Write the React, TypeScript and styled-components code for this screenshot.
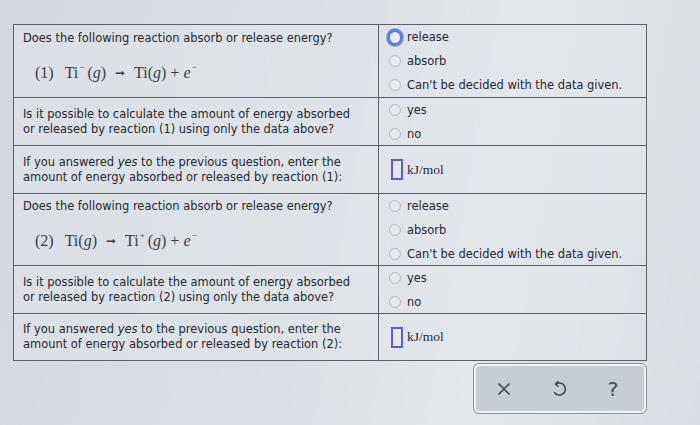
import React from "react";
import styled, { createGlobalStyle } from "styled-components";

const Global = createGlobalStyle`
  html, body { margin: 0; padding: 0; }
  body {
    width: 700px;
    height: 425px;
    overflow: hidden;
    background: linear-gradient(100deg, #d3d8de 0%, #dbe0e6 45%, #e3e7eb 70%, #d8dde3 100%);
    font-family: "DejaVu Sans", Verdana, sans-serif;
    color: #2a2d33;
  }
`;

const Page = styled.div`
  padding: 24px 0 0 13px;
  width: 634px;
`;

const Grid = styled.div`
  display: grid;
  grid-template-columns: 365px 268px;
  grid-template-rows: 73px 48px 48px 72px 48px 47px;
  border-top: 1px solid #5d6167;
  border-left: 1px solid #5d6167;
  background: rgba(226, 230, 235, 0.55);
  width: 634px;
  box-sizing: border-box;
`;

const Cell = styled.div`
  border-right: 1px solid #5d6167;
  border-bottom: 1px solid #5d6167;
  box-sizing: border-box;
  display: flex;
  flex-direction: column;
  justify-content: center;
  min-width: 0;
`;

const QText = styled.div`
  padding: 0 20px 0 9px;
  font-size: 11.45px;
  line-height: 15px;
  color: #25282e;
`;

const QStack = styled.div`
  display: flex;
  flex-direction: column;
  gap: 18px;
  padding: 0 0 8px;
`;

const Equation = styled.div`
  padding-left: 21px;
  font-family: "Liberation Serif", "Times New Roman", serif;
  font-size: 16px;
  line-height: 18px;
  color: #3a3d44;
  white-space: pre;
`;

const Num = styled.span`
  margin-right: 11px;
`;

const Sup = styled.span<{ $gap?: number }>`
  font-size: 9px;
  position: relative;
  top: -8px;
  margin-left: 1px;
  margin-right: ${(p) => p.$gap ?? 0}px;
`;

const Arrow = styled.span`
  font-size: 12px;
  margin: 0 9px;
  position: relative;
  top: -1px;
`;

const Options = styled.div`
  display: flex;
  flex-direction: column;
  padding-left: 8px;
`;

const Option = styled.label`
  display: flex;
  align-items: center;
  gap: 4px;
  height: 24px;
  font-size: 11.45px;
  color: #25282e;
`;

const RadioBox = styled.span`
  width: 16px;
  height: 16px;
  display: flex;
  align-items: center;
  justify-content: center;
`;

const Radio = styled.span<{ $focus?: boolean }>`
  box-sizing: border-box;
  border-radius: 50%;
  width: ${(p) => (p.$focus ? 17 : 12)}px;
  height: ${(p) => (p.$focus ? 17 : 12)}px;
  border: ${(p) => (p.$focus ? "3px solid #5f7fd6" : "1px solid #b9bec5")};
  background: ${(p) => (p.$focus ? "#e9ecf4" : "#e6e9ed")};
  box-shadow: ${(p) => (p.$focus ? "0 0 0 1px #8aa0dd" : "none")};
`;

const AnswerRow = styled.div`
  display: flex;
  align-items: center;
  gap: 4px;
  padding-left: 12px;
`;

const InputBox = styled.span`
  box-sizing: border-box;
  width: 12px;
  height: 21px;
  border: 2px solid #5b5fce;
  background: #e4e6f0;
`;

const Unit = styled.span`
  font-family: "Liberation Serif", "Times New Roman", serif;
  font-size: 13.5px;
  color: #2a2d33;
`;

const Footer = styled.div`
  display: flex;
  justify-content: flex-end;
  padding-top: 2px;
`;

const Toolbar = styled.div`
  box-sizing: border-box;
  width: 174px;
  height: 51px;
  border-radius: 6px;
  border: 1px solid #8b9097;
  box-shadow: inset 0 0 0 2px #f1f3f5;
  background: #c6ccd3;
  display: flex;
  align-items: center;
  justify-content: space-between;
  padding: 0 21px 0 18px;
`;

const ToolButton = styled.button`
  background: none;
  border: none;
  padding: 0;
  width: 24px;
  height: 24px;
  display: flex;
  align-items: center;
  justify-content: center;
  color: #3f434a;
`;

const Question = styled.span`
  font-family: "DejaVu Sans", sans-serif;
  font-size: 20px;
  color: #454950;
`;

const Em = styled.i``;

type Opt = { label: string; focus?: boolean };

const OptionList = ({ items }: { items: Opt[] }) => (
  <Options>
    {items.map((o) => (
      <Option key={o.label}>
        <RadioBox>
          <Radio $focus={o.focus} />
        </RadioBox>
        {o.label}
      </Option>
    ))}
  </Options>
);

const Answer = () => (
  <AnswerRow>
    <InputBox />
    <Unit>kJ/mol</Unit>
  </AnswerRow>
);

const Eq1 = () => (
  <Equation>
    <Num>(1)</Num>Ti<Sup $gap={3}>−</Sup>(<i>g</i>)<Arrow>➞</Arrow>Ti(<i>g</i>) + <i>e</i>
    <Sup>−</Sup>
  </Equation>
);

const Eq2 = () => (
  <Equation>
    <Num>(2)</Num>Ti(<i>g</i>)<Arrow>➞</Arrow>Ti<Sup $gap={3}>+</Sup>(<i>g</i>) + <i>e</i>
    <Sup>−</Sup>
  </Equation>
);

const absorbOpts = (first: boolean): Opt[] => [
  { label: "release", focus: first },
  { label: "absorb" },
  { label: "Can't be decided with the data given." },
];
const yesNo: Opt[] = [{ label: "yes" }, { label: "no" }];

const Block = ({ n, eq, first }: { n: number; eq: React.ReactNode; first: boolean }) => (
  <>
    <Cell>
      <QStack>
        <QText>Does the following reaction absorb or release energy?</QText>
        {eq}
      </QStack>
    </Cell>
    <Cell>
      <OptionList items={absorbOpts(first)} />
    </Cell>
    <Cell>
      <QText>
        Is it possible to calculate the amount of energy absorbed or released by reaction ({n}) using only the data above?
      </QText>
    </Cell>
    <Cell>
      <OptionList items={yesNo} />
    </Cell>
    <Cell>
      <QText>
        If you answered <Em>yes</Em> to the previous question, enter the amount of energy absorbed or released by reaction ({n}):
      </QText>
    </Cell>
    <Cell>
      <Answer />
    </Cell>
  </>
);

export default function App() {
  return (
    <>
      <Global />
      <Page>
        <Grid>
          <Block n={1} eq={<Eq1 />} first />
          <Block n={2} eq={<Eq2 />} first={false} />
        </Grid>
        <Footer>
          <Toolbar>
            <ToolButton aria-label="clear">
              <svg width="16" height="16" viewBox="0 0 16 16">
                <path d="M3 3 L13 13 M13 3 L3 13" stroke="currentColor" strokeWidth="1.6" strokeLinecap="round" />
              </svg>
            </ToolButton>
            <ToolButton aria-label="undo">
              <svg width="16" height="18" viewBox="0 0 16 18">
                <path d="M5 4 A6 6 0 1 1 3.5 12.5" fill="none" stroke="currentColor" strokeWidth="1.5" strokeLinecap="round" />
                <path d="M7 1.5 L4.5 4 L7 6.3" fill="none" stroke="currentColor" strokeWidth="1.5" strokeLinecap="round" strokeLinejoin="round" />
              </svg>
            </ToolButton>
            <ToolButton aria-label="help">
              <Question>?</Question>
            </ToolButton>
          </Toolbar>
        </Footer>
      </Page>
    </>
  );
}
